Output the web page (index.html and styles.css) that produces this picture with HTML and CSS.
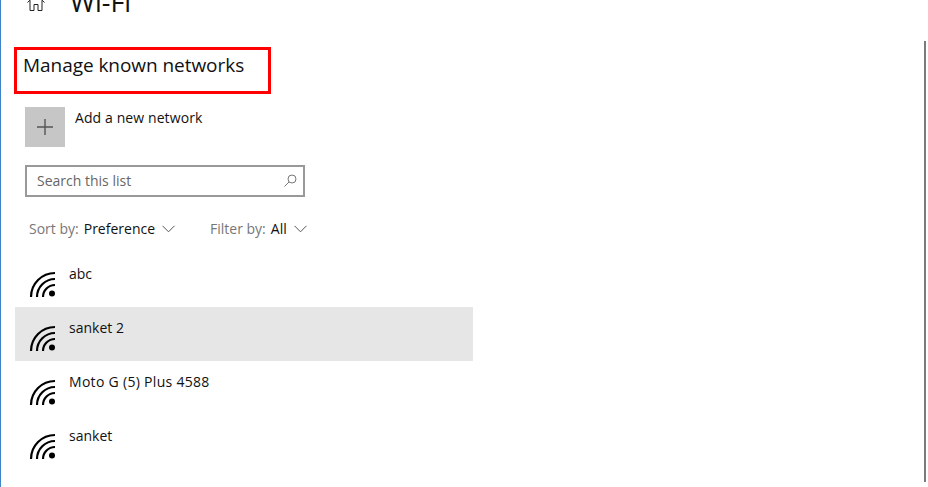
FILE: index.html
```html
<!DOCTYPE html>
<html>
<head>
  <meta charset="UTF-8">
  <title>Wi-Fi</title>
  <link rel="stylesheet" href="styles.css">
</head>
<body>
  <div class="page">
    <header class="top">
      <svg class="home" width="20" height="20" viewBox="0 0 20 20" fill="none" stroke="#222" stroke-width="1">
        <path d="M1.5 9.5 L10 1.5 L18.5 9.5 M4 7.500 V17.500 H8 V11.500 H12 V17.500 H16 V7.500"/>
      </svg>
      <span class="top-title">Wi-Fi</span>
    </header>

    <h2 class="marked">Manage known networks</h2>

    <div class="add-row">
      <div class="add-tile">
        <svg width="16" height="16" viewBox="0 0 16 16" stroke="#555" stroke-width="1.4">
          <path d="M8 0 V16 M0 8 H16"/>
        </svg>
      </div>
      <span>Add a new network</span>
    </div>

    <div class="search">
      <span>Search this list</span>
      <svg width="13" height="13" viewBox="0 0 13 13" fill="none" stroke="#777" stroke-width="1">
        <circle cx="8" cy="5" r="4"/>
        <path d="M5 8 L.5 12.500"/>
      </svg>
    </div>

    <div class="filters">
      <div class="filter">
        <span class="dim">Sort by:</span> Preference
        <svg class="chev" width="13" height="8" viewBox="0 0 13 8" fill="none" stroke="#555"><path d="M.5 .8 L6.500 6.800 L12.500 .8"/></svg>
      </div>
      <div class="filter">
        <span class="dim">Filter by:</span> All
        <svg class="chev" width="13" height="8" viewBox="0 0 13 8" fill="none" stroke="#555"><path d="M.5 .8 L6.500 6.800 L12.500 .8"/></svg>
      </div>
    </div>

    <ul class="networks">
      <li class="network">
        <svg class="wifi" width="28" height="28" viewBox="0 0 28 28" fill="none" stroke="#000" stroke-width="2.2"><path d="M3 26 A24 24 0 0 1 27 2"/><path d="M9 26 A18 18 0 0 1 27 8"/><path d="M15 26 A12 12 0 0 1 27 14"/><circle cx="24" cy="22.500" r="3" fill="#000" stroke="none"/></svg>
        <span>abc</span>
      </li>
      <li class="network selected">
        <svg class="wifi" width="28" height="28" viewBox="0 0 28 28" fill="none" stroke="#000" stroke-width="2.2"><path d="M3 26 A24 24 0 0 1 27 2"/><path d="M9 26 A18 18 0 0 1 27 8"/><path d="M15 26 A12 12 0 0 1 27 14"/><circle cx="24" cy="22.500" r="3" fill="#000" stroke="none"/></svg>
        <span>sanket 2</span>
      </li>
      <li class="network">
        <svg class="wifi" width="28" height="28" viewBox="0 0 28 28" fill="none" stroke="#000" stroke-width="2.2"><path d="M3 26 A24 24 0 0 1 27 2"/><path d="M9 26 A18 18 0 0 1 27 8"/><path d="M15 26 A12 12 0 0 1 27 14"/><circle cx="24" cy="22.500" r="3" fill="#000" stroke="none"/></svg>
        <span class="wide">Moto G (5) Plus 4588</span>
      </li>
      <li class="network">
        <svg class="wifi" width="28" height="28" viewBox="0 0 28 28" fill="none" stroke="#000" stroke-width="2.2"><path d="M3 26 A24 24 0 0 1 27 2"/><path d="M9 26 A18 18 0 0 1 27 8"/><path d="M15 26 A12 12 0 0 1 27 14"/><circle cx="24" cy="22.500" r="3" fill="#000" stroke="none"/></svg>
        <span>sanket</span>
      </li>
    </ul>

    <div class="scrollbar"></div>
  </div>
</body>
</html>
```

FILE: styles.css
```css
html, body {
  margin: 0;
  height: 100%;
  overflow: hidden;
  background: #fff;
}
body {
  font-family: 'Open Sans', 'Noto Sans', sans-serif;
  font-size: 14px;
  color: #111;
}
.page {
  position: relative;
  height: 487px;
  box-sizing: border-box;
  border-left: 1px solid #3d85c6;
  padding-left: 14px;
  overflow: hidden;
}
/* title is cut off by the top edge of the window */
.top {
  display: flex;
  align-items: center;
  height: 30px;
  margin-top: -13px;
  padding-left: 11px;
}
.home {
  margin-top: 2px;
}
.top-title {
  margin-left: 24px;
  font-size: 27px;
  line-height: 30px;
}
.marked {
  box-sizing: border-box;
  width: 257px;
  height: 47px;
  margin: 30px 0 0 -1px;
  padding: 2px 0 0 6px;
  border: 3px solid #f00;
  font-size: 19px;
  font-weight: 400;
  line-height: 27px;
  letter-spacing: -.05px;
}
.add-row {
  display: flex;
  gap: 10px;
  margin: 13px 0 0 10px;
  line-height: 22px;
  letter-spacing: .1px;
}
.add-tile {
  display: flex;
  align-items: center;
  justify-content: center;
  width: 40px;
  height: 40px;
  background: #c6c6c6;
}
.search {
  display: flex;
  align-items: center;
  justify-content: space-between;
  box-sizing: border-box;
  width: 280px;
  height: 32px;
  margin: 18px 0 0 10px;
  padding: 0 6px 2px 10px;
  border: 2px solid #999;
  color: #666;
}
.filters {
  display: flex;
  gap: 35px;
  margin: 22px 0 0 14px;
  line-height: 20px;
}
.filter {
  display: flex;
  align-items: center;
  gap: 5px;
}
.dim {
  color: #777;
}
.chev {
  margin-left: 2px;
}
.networks {
  list-style: none;
  width: 458px;
  margin: 14px 0 0;
  padding: 0;
}
.network {
  display: flex;
  gap: 13px;
  box-sizing: border-box;
  height: 54px;
  padding: 11px 0 0 13px;
  line-height: 20px;
}
.network.selected {
  background: #e6e6e6;
}
.wide {
  letter-spacing: .3px;
}
.wifi {
  margin-top: 7px;
}
/* thin scrollbar sitting over the right edge */
.scrollbar {
  position: absolute;
  top: 41px;
  left: 923px;
  width: 2px;
  height: 441px;
  background: #7a7a7a;
}
```
